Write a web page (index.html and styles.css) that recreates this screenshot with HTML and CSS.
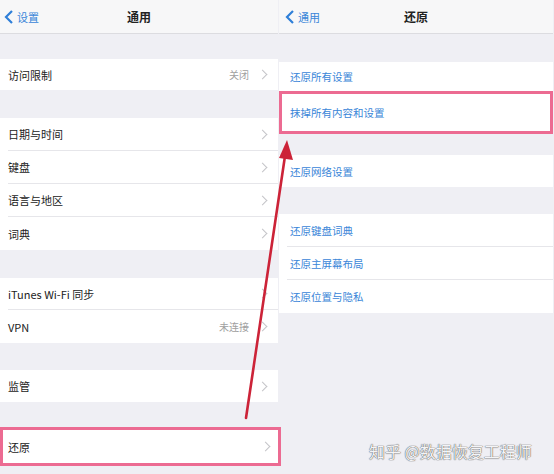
FILE: index.html
```html
<!DOCTYPE html>
<html lang="zh-CN">
<head>
    <meta charset="UTF-8">
    <meta name="viewport" content="width=device-width, initial-scale=1.0">
    <title>通用 / 还原</title>
    <link rel="stylesheet" href="styles.css">
</head>
<body>
<div class="screens">
    <!-- 通用 -->
    <div class="panel panel-left">
        <div class="nav">
            <span class="back">
                <svg width="10" height="14" viewBox="0 0 10 14"><polyline points="8,1 2,7 8,13" fill="none" stroke="#2f7fd8" stroke-width="2.2"/></svg>
                设置
            </span>
            <span class="title">通用</span>
        </div>
        <div class="group g1">
            <div class="row"><span>访问限制</span><span class="detail">关闭</span><i class="chev"></i></div>
        </div>
        <div class="group g2">
            <div class="row"><span>日期与时间</span><i class="chev"></i></div>
            <div class="row"><span>键盘</span><i class="chev"></i></div>
            <div class="row"><span>语言与地区</span><i class="chev"></i></div>
            <div class="row"><span>词典</span><i class="chev"></i></div>
        </div>
        <div class="group g3">
            <div class="row"><span>iTunes Wi-Fi 同步</span><i class="chev"></i></div>
            <div class="row"><span>VPN</span><span class="detail">未连接</span><i class="chev"></i></div>
        </div>
        <div class="group g4">
            <div class="row"><span>监管</span><i class="chev"></i></div>
        </div>
        <div class="group g5 marked">
            <div class="row"><span>还原</span><i class="chev"></i></div>
        </div>
    </div>

    <!-- 还原 -->
    <div class="panel panel-right">
        <div class="nav">
            <span class="back">
                <svg width="10" height="14" viewBox="0 0 10 14"><polyline points="8,1 2,7 8,13" fill="none" stroke="#2f7fd8" stroke-width="2.2"/></svg>
                通用
            </span>
            <span class="title">还原</span>
        </div>
        <div class="group r1">
            <div class="row action"><span>还原所有设置</span></div>
            <div class="row action marked tall"><span>抹掉所有内容和设置</span></div>
        </div>
        <div class="group r2">
            <div class="row action"><span>还原网络设置</span></div>
        </div>
        <div class="group r3">
            <div class="row action"><span>还原键盘词典</span></div>
            <div class="row action"><span>还原主屏幕布局</span></div>
            <div class="row action"><span>还原位置与隐私</span></div>
        </div>
    </div>

    <svg class="arrow" width="554" height="474" viewBox="0 0 554 474">
        <line x1="246" y1="418" x2="285" y2="156" stroke="#cc2338" stroke-width="2.6" stroke-linecap="round"/>
        <polygon points="287,140 293,160 279,158" fill="#cc2338"/>
    </svg>

    <div class="watermark">知乎 @数据恢复工程师</div>
</div>
</body>
</html>
```

FILE: styles.css
```css
body {
    margin: 0;
    background: #efeff4;
    font-family: "Noto Sans CJK SC", "Noto Sans", sans-serif;
}

.screens {
    position: relative;
    display: flex;
    width: 554px;
    height: 474px;
    overflow: hidden;
}

.panel {
    display: flex;
    flex-direction: column;
}

.panel-left {
    width: 278px;
}

.panel-right {
    width: 274px;
    margin-left: 1px;
}

.nav {
    position: relative;
    height: 33px;
    background: #f7f7f8;
    border-bottom: 1px solid #dcdce0;
    display: flex;
    align-items: center;
}

.back {
    display: flex;
    align-items: center;
    gap: 3px;
    padding-left: 4px;
    color: #3a86d8;
    font-size: 11px;
}

.panel-right .back {
    padding-left: 6px;
}

.title {
    position: absolute;
    left: 0;
    right: 0;
    text-align: center;
    font-size: 12px;
    font-weight: bold;
    color: #222;
    pointer-events: none;
}

.group {
    background: #fff;
}

.row {
    display: flex;
    align-items: center;
    height: 33px;
    margin-left: 8px;
    padding-right: 12px;
    border-bottom: 1px solid #e6e6ea;
    font-size: 11px;
    color: #222;
    box-sizing: border-box;
}

.row:last-child {
    border-bottom: none;
}

.row span:first-child {
    flex: 1;
}

.detail {
    color: #a0a0a0;
    font-size: 10px;
    margin-right: 10px;
}

.chev {
    width: 6px;
    height: 6px;
    border-top: 1.3px solid #c4c4c8;
    border-right: 1.3px solid #c4c4c8;
    transform: rotate(45deg);
}

/* left column spacing */
.g1 { margin-top: 25px; }
.g1 .row { height: 31px; }
.g2 { margin-top: 28px; }
.g3 { margin-top: 28px; }
.g3 .row:first-child { height: 32px; }
.g4 { margin-top: 27px; }
.g4 .row { height: 32px; }
.g5 { margin-top: 25px; }

.g5.marked {
    border: 3px solid #ec6b92;
    margin-right: -3px;
}

.g5 .row {
    height: 33px;
    margin-left: 5px;
    padding-right: 9px;
}

/* right column spacing */
.action {
    color: #3a86d8;
    font-size: 10.5px;
    padding-left: 3px;
}

.r1 { margin-top: 28px; }
.r1 .row:first-child { height: 29px; border-bottom: none; }

.row.marked {
    margin-left: 0;
    border: 3px solid #ec6b92;
    padding-left: 8px;
}

.row.tall { height: 43px; }

.r2 { margin-top: 21px; }
.r2 .row { height: 32px; }
.r3 { margin-top: 27px; }

.arrow {
    position: absolute;
    left: 0;
    top: 0;
    pointer-events: none;
}

.watermark {
    position: absolute;
    left: 369px;
    top: 439px;
    font-size: 16px;
    color: #f4f4f6;
    text-shadow: 0 0 1px #555, 0 0 1px #555;
}
```
